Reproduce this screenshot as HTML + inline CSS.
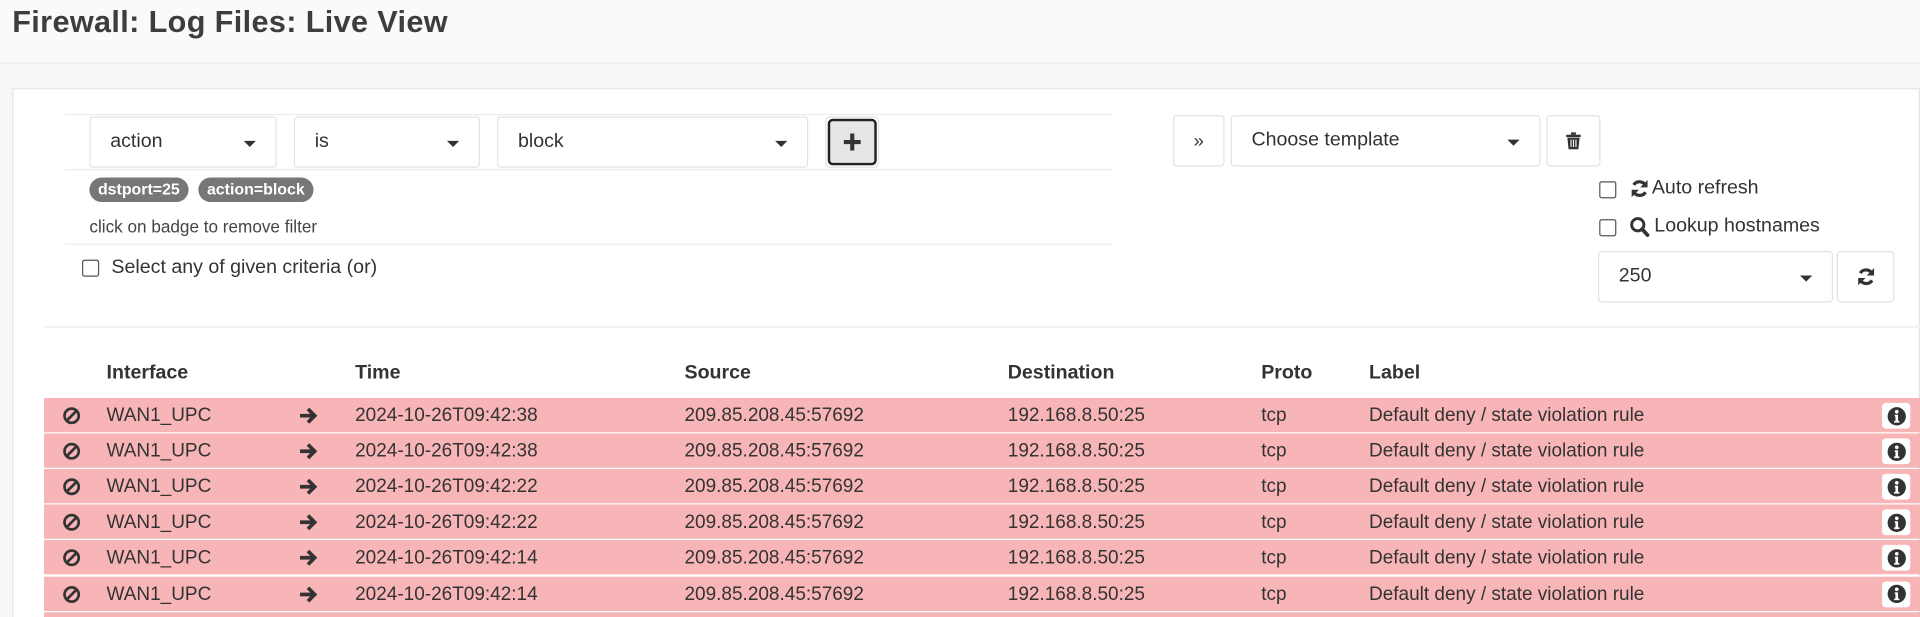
<!DOCTYPE html>
<html><head><meta charset="utf-8"><style>
*{box-sizing:border-box;margin:0;padding:0}
html,body{width:1920px;height:617px;overflow:hidden;background:#f7f7f7}
#w{position:absolute;left:0;top:0;width:1568px;height:504px;overflow:hidden;transform:scale(1.2245);transform-origin:0 0;font-family:"Liberation Sans",sans-serif;color:#333;font-size:15px}
.a{position:absolute}
.hdr{left:0;top:0;width:1568px;height:52px;background:#fafafa;border-bottom:1px solid #ececec}
.title{left:10px;top:4px;font-size:25px;font-weight:bold;color:#3d3d3d;letter-spacing:0.3px}
.panel{left:10px;top:72px;width:1558px;height:432px;background:#fff;border:1px solid #e4e4e4;border-bottom:none}
.line{height:1px;background:#ececec}
.sel{background:#fff;border:1px solid #e2e2e2;border-radius:3px;height:42px;padding:11px 16px;font-size:16px;color:#333}
.sel .car{position:absolute;right:16px;top:19px;width:0;height:0;border-left:5px solid transparent;border-right:5px solid transparent;border-top:5px solid #333}
.btn{background:#fff;border:1px solid #e2e2e2;border-radius:3px;height:42px;display:flex;align-items:center;justify-content:center}
.badge{background:#777;color:#fff;border-radius:10px;font-size:13px;font-weight:bold;height:20px;line-height:20px;padding:0 7px}
.cb{width:14px;height:14px;border:1px solid #555;border-radius:2px;background:#fff}
.th{top:296px;font-size:16px;font-weight:bold;color:#333}
.row{left:36px;width:1532px;height:28px;background:#f8b5b7}
.c{position:absolute;top:6px;font-size:15.5px;color:#333}
.info{position:absolute;left:1501px;top:4px;width:23px;height:21px;background:#fff;border-radius:3px;display:flex;align-items:center;justify-content:center}
</style></head><body><div id="w">
<div class="a hdr"></div>
<div class="a title">Firewall: Log Files: Live View</div>
<div class="a panel"></div>

<div class="a line" style="left:53px;top:93px;width:855px"></div>
<div class="a sel" style="left:73px;top:95px;width:153px">action<span class="car"></span></div>
<div class="a sel" style="left:240px;top:95px;width:152px">is<span class="car"></span></div>
<div class="a sel" style="left:406px;top:95px;width:254px">block<span class="car"></span></div>
<div class="a" style="left:674px;top:95px;width:44px;height:42px;border:1px solid #e2e2e2;border-radius:4px;padding:1px"><div style="width:40px;height:38px;border:2px solid #222;border-radius:4px;background:#e6e6e6;display:flex;align-items:center;justify-content:center"><svg width="14" height="14" viewBox="0 0 14 14"><path d="M5.3 0h3.4v5.3H14v3.4H8.7V14H5.3V8.7H0V5.3h5.3z" fill="#333"/></svg></div></div>
<div class="a line" style="left:53px;top:138px;width:855px"></div>
<div class="a badge" style="left:73px;top:145px">dstport=25</div>
<div class="a badge" style="left:162px;top:145px">action=block</div>
<div class="a" style="left:73px;top:177px;font-size:14px;color:#444">click on badge to remove filter</div>
<div class="a line" style="left:53px;top:199px;width:855px"></div>
<div class="a cb" style="left:67px;top:212px"></div>
<div class="a" style="left:91px;top:210px;font-size:16px">Select any of given criteria (or)</div>

<div class="a btn" style="left:958px;top:94px;width:42px">»</div>
<div class="a sel" style="left:1005px;top:94px;width:253px">Choose template<span class="car"></span></div>
<div class="a btn" style="left:1263px;top:94px;width:44px"><svg width="12" height="14" viewBox="0 0 12 14"><rect x="0" y="2" width="12" height="2" fill="#333"/><rect x="4" y="0" width="4" height="2" fill="#333"/><path d="M1 4.5h10l-1 9.5H2z" fill="#333"/><path d="M4 6v6M6 6v6M8 6v6" stroke="#fff" stroke-width="0.9"/></svg></div>
<div class="a cb" style="left:1306px;top:148px"></div>
<svg class="a" style="left:1331px;top:146px" width="16" height="16" viewBox="0 0 16 16"><path d="M13 6A5.5 5.5 0 0 0 3.2 5M3 10a5.5 5.5 0 0 0 9.8 1" stroke="#333" stroke-width="2.6" fill="none"/><path d="M14.5 1v6h-6zM1.5 15V9h6z" fill="#333"/></svg>
<div class="a" style="left:1349px;top:145px;font-size:16px">Auto refresh</div>
<div class="a cb" style="left:1306px;top:179px"></div>
<svg class="a" style="left:1331px;top:177px" width="16" height="17" viewBox="0 0 16 17"><circle cx="6.5" cy="6.5" r="5" stroke="#333" stroke-width="2.4" fill="none"/><path d="M10 10l4.5 5" stroke="#333" stroke-width="3" stroke-linecap="round"/></svg>
<div class="a" style="left:1351px;top:176px;font-size:16px">Lookup hostnames</div>
<div class="a sel" style="left:1305px;top:205px;width:192px;height:42px">250<span class="car"></span></div>
<div class="a btn" style="left:1500px;top:205px;width:47px"><svg width="16" height="16" viewBox="0 0 16 16"><path d="M13 6A5.5 5.5 0 0 0 3.2 5M3 10a5.5 5.5 0 0 0 9.8 1" stroke="#333" stroke-width="2.6" fill="none"/><path d="M14.5 1v6h-6zM1.5 15V9h6z" fill="#333"/></svg></div>

<div class="a line" style="left:36px;top:266px;width:1532px;height:2px;background:#f2f2f2"></div>
<div class="a th" style="left:87px">Interface</div>
<div class="a th" style="left:290px">Time</div>
<div class="a th" style="left:559px">Source</div>
<div class="a th" style="left:823px">Destination</div>
<div class="a th" style="left:1030px">Proto</div>
<div class="a th" style="left:1118px">Label</div>

<div id="rows"></div>
</div>
<script>
var t=["38","38","22","22","14","14"],h="";
for(var i=0;i<7;i++){var y=325+i*29.1;
if(i==6){h+='<div class="a row" style="top:'+y+'px;height:5px"></div>';break;}
h+='<div class="a row" style="top:'+y+'px">'+
'<svg class="c" style="left:15px;top:7px" width="15" height="15" viewBox="0 0 15 15"><circle cx="7.5" cy="7.5" r="5.8" stroke="#333" stroke-width="2.2" fill="none"/><path d="M3.5 11.5l8-8" stroke="#333" stroke-width="2.2"/></svg>'+
'<span class="c" style="left:51px">WAN1_UPC</span>'+
'<svg class="c" style="left:208px;top:7px" width="16" height="15" viewBox="0 0 16 15"><path d="M1 7.5h11M7.5 2l5.5 5.5L7.5 13" stroke="#333" stroke-width="3" fill="none"/></svg>'+
'<span class="c" style="left:254px">2024-10-26T09:42:'+t[i]+'</span>'+
'<span class="c" style="left:523px">209.85.208.45:57692</span>'+
'<span class="c" style="left:787px">192.168.8.50:25</span>'+
'<span class="c" style="left:994px">tcp</span>'+
'<span class="c" style="left:1082px">Default deny / state violation rule</span>'+
'<div class="info"><svg width="16" height="16" viewBox="0 0 15 15"><circle cx="7.5" cy="7.5" r="7" fill="#333"/><circle cx="7.5" cy="4" r="1.4" fill="#fff"/><path d="M6 6.3h2.5v4.7h1v1.3h-4V11h1V7.6H6z" fill="#fff"/></svg></div>'+
'</div>';}
document.getElementById("rows").innerHTML=h;
</script>
</body></html>
